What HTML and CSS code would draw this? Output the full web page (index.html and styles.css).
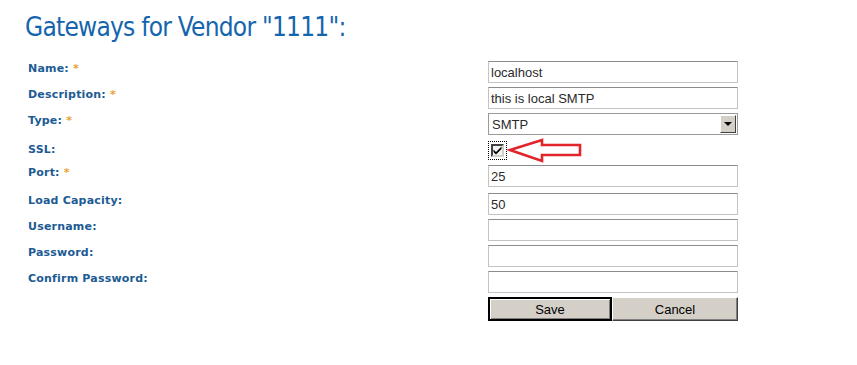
FILE: index.html
```html
<!DOCTYPE html>
<html lang="en">
<head>
<meta charset="UTF-8" />
<title>Gateways for Vendor</title>
<link rel="stylesheet" href="styles.css">
</head>
<body>

<h1 class="title">Gateways for Vendor "1111":</h1>

<form class="gateway-form">
  <div class="row">
    <label class="lbl" for="name">Name: <span class="req">*</span></label>
    <input class="field" type="text" id="name" value="localhost" />
  </div>
  <div class="row">
    <label class="lbl" for="desc">Description: <span class="req">*</span></label>
    <input class="field" type="text" id="desc" value="this is local SMTP" />
  </div>
  <div class="row">
    <label class="lbl" for="type">Type: <span class="req">*</span></label>
    <div class="field select">
      <span>SMTP</span>
      <span class="select-btn"><span class="tri"></span></span>
    </div>
  </div>
  <div class="row row-ssl">
    <label class="lbl" for="ssl">SSL:</label>
    <div class="check-wrap">
      <span class="check">
        <svg width="9" height="9" viewBox="0 0 9 9"><path d="M0.5 3.5 L3 6 L8.5 0.5 L8.5 3 L3 8.5 L0.5 6 Z" fill="#000"/></svg>
      </span>
      <svg class="arrow" width="80" height="26" viewBox="0 0 80 26">
        <path d="M3 12 L35 2 L35 7 L73 7 L73 17 L35 17 L35 23 Z" fill="#fff" stroke="#e1252b" stroke-width="2.6" stroke-linejoin="miter"/>
      </svg>
    </div>
  </div>
  <div class="row row-port">
    <label class="lbl" for="port">Port: <span class="req">*</span></label>
    <input class="field" type="text" id="port" value="25" />
  </div>
  <div class="row">
    <label class="lbl" for="load">Load Capacity:</label>
    <input class="field" type="text" id="load" value="50" />
  </div>
  <div class="row">
    <label class="lbl" for="user">Username:</label>
    <input class="field" type="text" id="user" value="" />
  </div>
  <div class="row">
    <label class="lbl" for="pass">Password:</label>
    <input class="field" type="text" id="pass" value="" />
  </div>
  <div class="row">
    <label class="lbl" for="pass2">Confirm Password:</label>
    <input class="field" type="text" id="pass2" value="" />
  </div>
  <div class="row">
    <span class="lbl"></span>
    <div class="buttons">
      <button type="button" class="btn btn-default">Save</button>
      <button type="button" class="btn">Cancel</button>
    </div>
  </div>
</form>

</body>
</html>
```

FILE: styles.css
```css
body {
  margin: 0;
  padding: 0;
  background: #fff;
  font-family: "Liberation Sans", Arial, sans-serif;
}
.title {
  margin: 0;
  padding: 11px 0 0 25px;
  height: 50px;
  box-sizing: border-box;
  font-family: "DejaVu Sans", Verdana, sans-serif;
  font-stretch: condensed;
  font-weight: normal;
  font-size: 26px;
  letter-spacing: -0.75px;
  line-height: 32px;
  color: #1565ad;
}
.gateway-form {
  padding: 11px 0 0 28px;
}
.row {
  display: flex;
  align-items: flex-start;
  height: 22px;
  margin-bottom: 4px;
}
.row-port {
  margin-bottom: 6px;
}
.lbl {
  width: 460px;
  flex: none;
  padding-top: 1px;
  font-family: "DejaVu Sans", Verdana, sans-serif;
  font-weight: bold;
  font-size: 11px;
  letter-spacing: 0.2px;
  line-height: 14px;
  color: #1c5b94;
}
.row-ssl .lbl {
  padding-top: 4px;
}
.req {
  color: #e8a433;
}
.field {
  width: 250px;
  height: 22px;
  box-sizing: border-box;
  margin: 0;
  padding: 0 2px;
  border: 1px solid #c3c3c3;
  border-top-color: #8c8c8c;
  font-family: "Liberation Sans", Arial, sans-serif;
  font-size: 13px;
  color: #2a2a2a;
  background: #fff;
  outline: none;
}
.select {
  display: flex;
  align-items: center;
  justify-content: space-between;
  padding: 0 1px 0 3px;
  border-color: #9a9a9a;
}
.select-btn {
  width: 16px;
  height: 18px;
  box-sizing: border-box;
  background: #d4d0c8;
  border: 1px solid #fff;
  border-right-color: #404040;
  border-bottom-color: #404040;
  display: flex;
  align-items: center;
  justify-content: center;
}
.tri {
  width: 0;
  height: 0;
  border-left: 4px solid transparent;
  border-right: 4px solid transparent;
  border-top: 4px solid #000;
}
.check-wrap {
  position: relative;
  width: 250px;
  height: 22px;
}
.check {
  position: absolute;
  left: 3px;
  top: 5px;
  width: 13px;
  height: 13px;
  box-sizing: border-box;
  border: 2px solid #404040;
  border-right-color: #d4d0c8;
  border-bottom-color: #d4d0c8;
  background: #f3f3f3;
  outline: 1px dotted #000;
  outline-offset: 2px;
  display: flex;
  align-items: center;
  justify-content: center;
}
.arrow {
  position: absolute;
  left: 19px;
  top: -1px;
}
.buttons {
  display: flex;
  width: 250px;
}
.btn {
  height: 24px;
  box-sizing: border-box;
  margin: 0;
  background: #d4d0c8;
  font-family: "Liberation Sans", Arial, sans-serif;
  font-size: 13px;
  color: #000;
  border: 1px solid #fff;
  border-right-color: #404040;
  border-bottom-color: #404040;
  box-shadow: inset -1px -1px 0 #808080;
  padding: 0;
  cursor: pointer;
}
.btn-default {
  width: 124px;
  border: 2px solid #000;
  box-shadow: inset 1px 1px 0 #fff, inset -1px -1px 0 #808080;
}
.btn + .btn {
  width: 126px;
}
```
